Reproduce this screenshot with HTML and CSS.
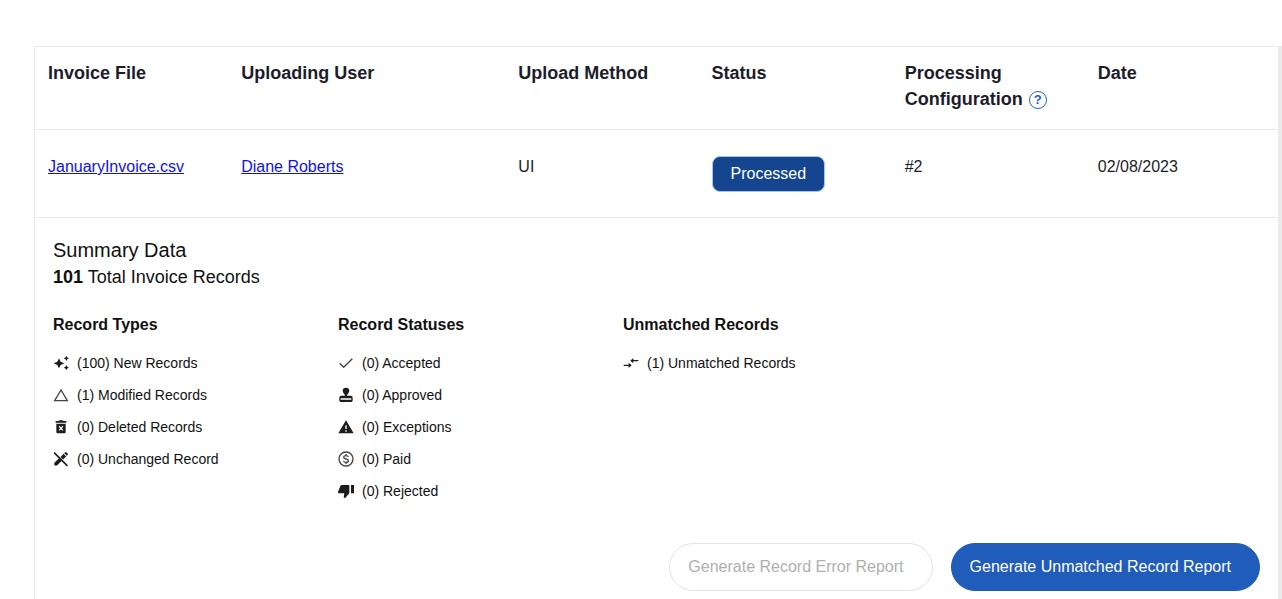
FILE: index.html
```html
<!DOCTYPE html>
<html lang="en">
<head>
    <meta charset="UTF-8">
    <meta name="viewport" content="width=device-width, initial-scale=1.0">
    <title>Invoice Uploads</title>
    <link rel="stylesheet" href="styles.css">
</head>
<body>
    <main class="page">
        <div class="card">
            <table class="invoices">
                <thead>
                    <tr>
                        <th>Invoice File</th>
                        <th class="col-user">Uploading User</th>
                        <th>Upload Method</th>
                        <th>Status</th>
                        <th>Processing Configuration
                            <button class="help" type="button" aria-label="Help">?</button>
                        </th>
                        <th>Date</th>
                    </tr>
                </thead>
                <tbody>
                    <tr>
                        <td><a href="#">JanuaryInvoice.csv</a></td>
                        <td><a href="#">Diane Roberts</a></td>
                        <td>UI</td>
                        <td><span class="badge">Processed</span></td>
                        <td>#2</td>
                        <td>02/08/2023</td>
                    </tr>
                </tbody>
            </table>

            <section class="summary">
                <h2>Summary Data</h2>
                <p class="total"><strong>101</strong> Total Invoice Records</p>

                <div class="groups">
                    <div>
                        <h3>Record Types</h3>
                        <ul>
                            <li>
                                <svg class="icon" viewBox="0 0 24 24"><path d="M9 5l2.500 5L17 12.500l-5.500 2.500L9 20l-2.500-5L1 12.500 6.500 10zM20 1l1.300 2.700L24 5l-2.700 1.300L20 9l-1.300-2.700L16 5l2.700-1.300zM20 15l1.300 2.700L24 19l-2.700 1.300L20 23l-1.300-2.700L16 19l2.700-1.300z"/></svg>
                                (100) New Records
                            </li>
                            <li>
                                <svg class="icon line" viewBox="0 0 24 24"><path d="M12 4.500L21.500 20.500h-19z"/></svg>
                                (1) Modified Records
                            </li>
                            <li>
                                <svg class="icon" viewBox="0 0 24 24"><path fill-rule="evenodd" d="M4 3h4.500l1-1h5l1 1H20v2.500H4zM5 7h14v12.500a2 2 0 0 1-2 2H7a2 2 0 0 1-2-2zM8.500 11.500l2.200 2.500-2.200 2.500 1.300 1.300L12 15.400l2.200 2.400 1.300-1.300-2.200-2.500 2.200-2.500-1.300-1.300L12 12.600l-2.200-2.400z"/></svg>
                                (0) Deleted Records
                            </li>
                            <li>
                                <svg class="icon" viewBox="0 0 24 24"><path d="M2.500 1.500L22.500 21.500l-1.700 1.700L.800 3.200zM10 10.200l3.800 3.800L6 21.800H2v-4zM11.300 8.900l4.600-4.600 3.800 3.800-4.600 4.600zM17 3.200l1.300-1.300a1.200 1.200 0 0 1 1.700 0l2.100 2.100a1.200 1.200 0 0 1 0 1.700L20.800 7z"/></svg>
                                (0) Unchanged Record
                            </li>
                        </ul>
                    </div>
                    <div>
                        <h3>Record Statuses</h3>
                        <ul>
                            <li>
                                <svg class="icon line" viewBox="0 0 24 24"><path d="M2.500 12.500L8.500 18.500 21.500 5.500"/></svg>
                                (0) Accepted
                            </li>
                            <li>
                                <svg class="icon" viewBox="0 0 24 24"><path fill-rule="evenodd" d="M12 1a5 5 0 0 1 5 5c0 3-3.500 4.500-3.500 7H19a3 3 0 0 1 3 3v3a3 3 0 0 1-2 3.500H4A3 3 0 0 1 2 19v-3a3 3 0 0 1 3-3h5.500c0-2.500-3.500-4-3.500-7a5 5 0 0 1 5-5zM4 17v2h16v-2z"/></svg>
                                (0) Approved
                            </li>
                            <li>
                                <svg class="icon" viewBox="0 0 24 24"><path fill-rule="evenodd" d="M12 2l11.500 19.500H.500zM11 9.500V15h2V9.500zM11 17v2h2v-2z"/></svg>
                                (0) Exceptions
                            </li>
                            <li>
                                <svg class="icon line" viewBox="0 0 24 24"><circle cx="12" cy="12" r="10.500"/><path d="M15.500 9c-.400-1.300-1.700-2-3.500-2s-3.400.800-3.400 2.400c0 3.600 7 1.600 7 5.200 0 1.600-1.600 2.400-3.600 2.400s-3.300-.800-3.700-2.200M12 4.500V7M12 17v2.500"/></svg>
                                (0) Paid
                            </li>
                            <li>
                                <svg class="icon" viewBox="0 0 24 24"><path d="M6 3h11v12.500l-6.500 7.500-2-1.500 1-6H1.500C.500 15.500 0 14.500 0 13.500L3.500 4.500C4 3.500 5 3 6 3zM19.500 3H24v12.500h-4.500z"/></svg>
                                (0) Rejected
                            </li>
                        </ul>
                    </div>
                    <div>
                        <h3>Unmatched Records</h3>
                        <ul>
                            <li>
                                <svg class="icon" viewBox="0 0 24 24"><path d="M8.500 11.500l4.500 4-4.500 4v-3H1v-2h7.500zM15.500 4.500v3H23v2h-7.500v3L11 8.500z"/></svg>
                                (1) Unmatched Records
                            </li>
                        </ul>
                    </div>
                </div>

                <div class="actions">
                    <button class="btn" type="button" disabled>Generate Record Error Report</button>
                    <button class="btn btn-primary" type="button">Generate Unmatched Record Report</button>
                </div>
            </section>
        </div>
    </main>
</body>
</html>
```
FILE: styles.css
```css
* {
    box-sizing: border-box;
}

body {
    margin: 0;
    font-family: "Liberation Sans", Arial, sans-serif;
    font-size: 16px;
    line-height: 22px;
    background: #fff;
    color: #1d1c2b;
}

h2, h3, p, ul {
    margin: 0;
    padding: 0;
}

.page {
    padding: 46px 0 0 34px;
}

.card {
    border: 1px solid #e8e8ea;
    border-right: 4px solid #ebebeb;
    border-bottom: none;
}

.invoices {
    width: 100%;
    table-layout: fixed;
    border-collapse: collapse;
}

.invoices th,
.invoices td {
    padding: 26px 14px 25px 13px;
    border-bottom: 1px solid #ebebee;
    text-align: left;
    vertical-align: top;
}

.invoices th {
    padding-top: 13px;
    padding-bottom: 17px;
    font-size: 18px;
    line-height: 26px;
}

.col-user {
    width: 22.3%;
}

.invoices a {
    color: #0d12ee;
}

.help {
    width: 18px;
    height: 18px;
    margin-left: 1px;
    padding: 0;
    border: 1px solid #2060c8;
    border-radius: 50%;
    background: none;
    color: #2060c8;
    font: bold 13px/16px "Liberation Sans", Arial, sans-serif;
    vertical-align: middle;
    cursor: pointer;
}

.badge {
    display: inline-block;
    padding: 6px 18px;
    border: 1px solid #a9c3f0;
    border-radius: 8px;
    background: #15458e;
    color: #fff;
    vertical-align: top;
}

.summary {
    padding: 18px 18px 8px;
    color: #111;
}

.summary h2 {
    font-size: 20px;
    font-weight: normal;
    line-height: 28px;
}

.total {
    font-size: 18px;
    line-height: 26px;
}

.groups {
    display: grid;
    grid-template-columns: repeat(3, 1fr);
    max-width: 855px;
    margin-top: 23px;
}

.summary h3 {
    font-size: 16px;
    line-height: 24px;
    margin-bottom: 10px;
}

.groups li {
    display: flex;
    align-items: center;
    gap: 8px;
    height: 32px;
    font-size: 14px;
}

.icon {
    width: 16px;
    height: 16px;
    fill: #1c1c1c;
}

.line {
    fill: none;
    stroke: #444;
    stroke-width: 2;
}

.actions {
    display: flex;
    justify-content: flex-end;
    gap: 18px;
    margin-top: 36px;
}

.btn {
    height: 48px;
    padding: 0 28px 0 18px;
    border: 1px solid #e3e3e3;
    border-radius: 24px;
    background: #fff;
    color: #b0b0b0;
    font-family: inherit;
    font-size: 16px;
}

.btn-primary {
    border-color: #205cba;
    background: #205cba;
    color: #fff;
    cursor: pointer;
}
```
